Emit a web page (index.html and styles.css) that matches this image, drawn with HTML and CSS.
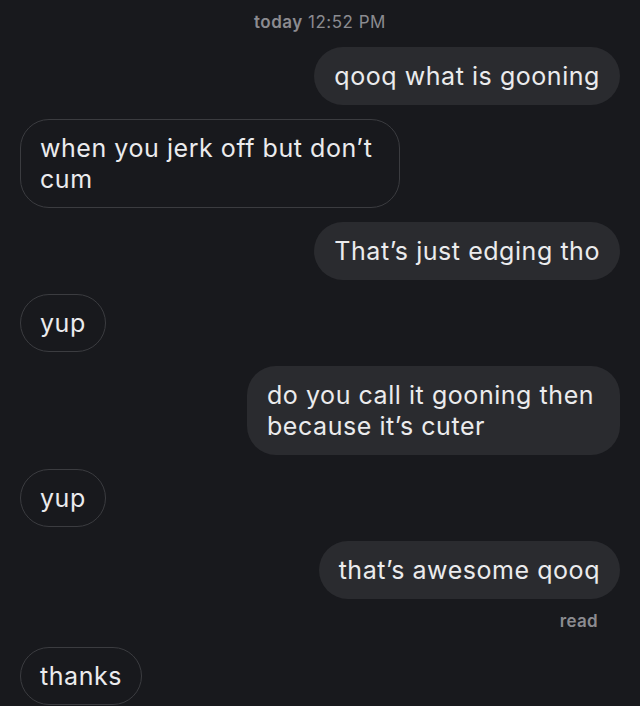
FILE: index.html
```html
<!DOCTYPE html>
<html>
<head>
<meta charset="utf-8">
<link rel="stylesheet" href="styles.css">
</head>
<body>
<div class="chat">
  <div class="stamp"><b>today</b> 12:52 PM</div>
  <div class="bubble sent">qooq what is gooning</div>
  <div class="bubble recv">when you jerk off but don’t cum</div>
  <div class="bubble sent">That’s just edging tho</div>
  <div class="bubble recv">yup</div>
  <div class="bubble sent narrow">do you call it gooning then because it’s cuter</div>
  <div class="bubble recv">yup</div>
  <div class="bubble sent">that’s awesome qooq</div>
  <div class="read">read</div>
  <div class="bubble recv">thanks</div>
</div>
</body>
</html>
```

FILE: styles.css
```css
html, body {
  margin: 0;
  padding: 0;
  background: #18191d;
}
body {
  width: 640px;
  height: 706px;
  overflow: hidden;
  font-family: Inter, "Liberation Sans", sans-serif;
}
.chat {
  display: flex;
  flex-direction: column;
  gap: 14px;
  padding: 10px 20px 0 20px;
}
.stamp {
  align-self: center;
  color: #8b8b90;
  font-size: 17px;
  line-height: 24px;
  letter-spacing: 0.5px;
  margin-bottom: -1px;
}
.stamp b {
  font-weight: 600;
}
.bubble {
  box-sizing: border-box;
  max-width: 380px;
  padding: 13.5px 20px;
  font-size: 25px;
  line-height: 31px;
  color: #ebebed;
  border-radius: 29px;
  letter-spacing: 0.55px;
}
.sent {
  align-self: flex-end;
  background: #2a2b2f;
}
.narrow {
  max-width: 373px;
}
.recv {
  align-self: flex-start;
  background: #18191d;
  border: 1px solid #3b3c40;
  padding: 12.5px 19px;
}
.read {
  align-self: flex-end;
  margin-right: 22px;
  margin-top: -3px;
  margin-bottom: 1px;
  color: #8b8b90;
  font-size: 17px;
  font-weight: 600;
  line-height: 22px;
  letter-spacing: 0.3px;
}
```
